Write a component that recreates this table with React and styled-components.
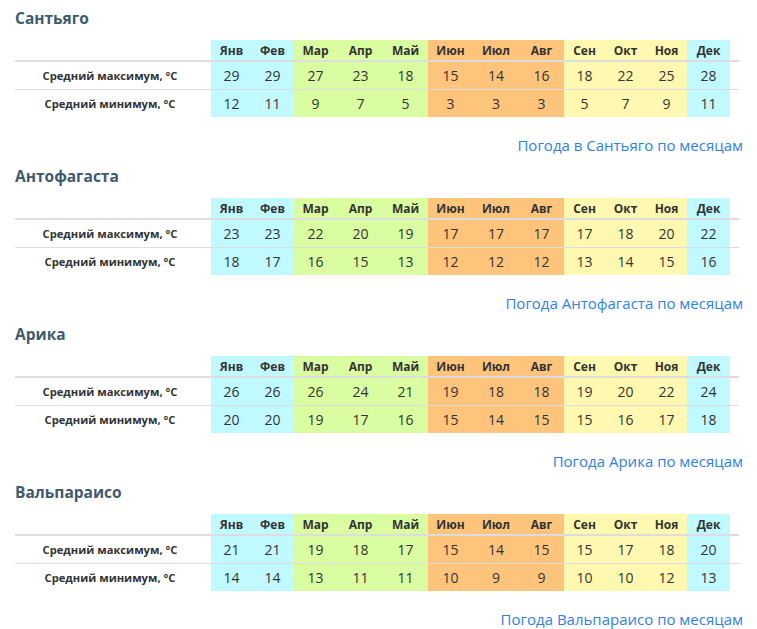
import React from "react";
import styled, { createGlobalStyle } from "styled-components";

const Global = createGlobalStyle`
  html, body { margin: 0; padding: 0; background: #fff; }
  body { font-family: "Open Sans", "Noto Sans", sans-serif; color: #333; }
`;

const SEASON = {
  cyan: "#c0f9ff",
  green: "#d9fda0",
  orange: "#fec47b",
  yellow: "#fff8b0",
};

const MONTHS = [
  { name: "Янв", s: "cyan", w: 41 },
  { name: "Фев", s: "cyan", w: 41 },
  { name: "Мар", s: "green", w: 45 },
  { name: "Апр", s: "green", w: 45 },
  { name: "Май", s: "green", w: 45 },
  { name: "Июн", s: "orange", w: 45 },
  { name: "Июл", s: "orange", w: 46 },
  { name: "Авг", s: "orange", w: 45 },
  { name: "Сен", s: "yellow", w: 41 },
  { name: "Окт", s: "yellow", w: 41 },
  { name: "Ноя", s: "yellow", w: 41 },
  { name: "Дек", s: "cyan", w: 43 },
];

const CITIES = [
  {
    title: "Сантьяго",
    link: "Погода в Сантьяго по месяцам",
    max: [29, 29, 27, 23, 18, 15, 14, 16, 18, 22, 25, 28],
    min: [12, 11, 9, 7, 5, 3, 3, 3, 5, 7, 9, 11],
  },
  {
    title: "Антофагаста",
    link: "Погода Антофагаста по месяцам",
    max: [23, 23, 22, 20, 19, 17, 17, 17, 17, 18, 20, 22],
    min: [18, 17, 16, 15, 13, 12, 12, 12, 13, 14, 15, 16],
  },
  {
    title: "Арика",
    link: "Погода Арика по месяцам",
    max: [26, 26, 26, 24, 21, 19, 18, 18, 19, 20, 22, 24],
    min: [20, 20, 19, 17, 16, 15, 14, 15, 15, 16, 17, 18],
  },
  {
    title: "Вальпараисо",
    link: "Погода Вальпараисо по месяцам",
    max: [21, 21, 19, 18, 17, 15, 14, 15, 15, 17, 18, 20],
    min: [14, 14, 13, 11, 11, 10, 9, 9, 10, 10, 12, 13],
  },
];

const Page = styled.div`
  padding: 0 14px 0 15px;
`;

const Section = styled.section`
  padding: 8px 0 3px;
`;

const Title = styled.h2`
  margin: 0 0 12px;
  font-size: 15.5px;
  line-height: 20px;
  font-weight: 700;
  color: #3e5a6c;
`;

const Grid = styled.div`
  display: grid;
  width: 724px;
  grid-template-columns: 196px ${MONTHS.map((m) => m.w + "px").join(" ")} 1fr;
`;

const Row = styled.div`
  display: contents;
`;

const Cell = styled.div`
  display: flex;
  align-items: center;
  justify-content: center;
  background: ${(p) => (p.$season ? SEASON[p.$season] : "transparent")};
  border-bottom: ${(p) => (p.$border ? `${p.$border}px solid #dddddd` : "none")};
  height: ${(p) => p.$h}px;
  box-sizing: content-box;
`;

const HeadText = styled.span`
  font-size: 12px;
  font-weight: 700;
  color: #333;
`;

const NumText = styled.span`
  font-size: 14px;
  color: #333;
`;

const Label = styled.span`
  font-size: 11.2px;
  font-weight: 700;
  color: #333;
  margin-right: 6px;
`;

const LinkRow = styled.div`
  margin-top: 18px;
  text-align: right;
  font-size: 15px;
  line-height: 20px;
  height: 20px;
`;

const MonthLink = styled.a`
  font-size: 15px;
  line-height: 20px;
  color: #2f80ed;
  text-decoration: none;
`;

function TableRow({ label, values, border, h }) {
  return (
    <Row>
      <Cell $border={border} $h={h}>
        {label && <Label>{label}</Label>}
      </Cell>
      {MONTHS.map((m, i) => (
        <Cell key={m.name} $season={m.s} $border={border} $h={h}>
          {values ? <NumText>{values[i]}</NumText> : <HeadText>{m.name}</HeadText>}
        </Cell>
      ))}
      <Cell $border={border} $h={h} />
    </Row>
  );
}

function CityTable({ city }) {
  return (
    <Section>
      <Title>{city.title}</Title>
      <Grid>
        <TableRow border={2} h={20} />
        <TableRow label="Средний максимум, °C" values={city.max} border={1} h={27} />
        <TableRow label="Средний минимум, °C" values={city.min} border={0} h={27} />
      </Grid>
      <LinkRow>
        <MonthLink href="#">{city.link}</MonthLink>
      </LinkRow>
    </Section>
  );
}

export default function App() {
  return (
    <Page>
      <Global />
      {CITIES.map((c) => (
        <CityTable key={c.title} city={c} />
      ))}
    </Page>
  );
}
